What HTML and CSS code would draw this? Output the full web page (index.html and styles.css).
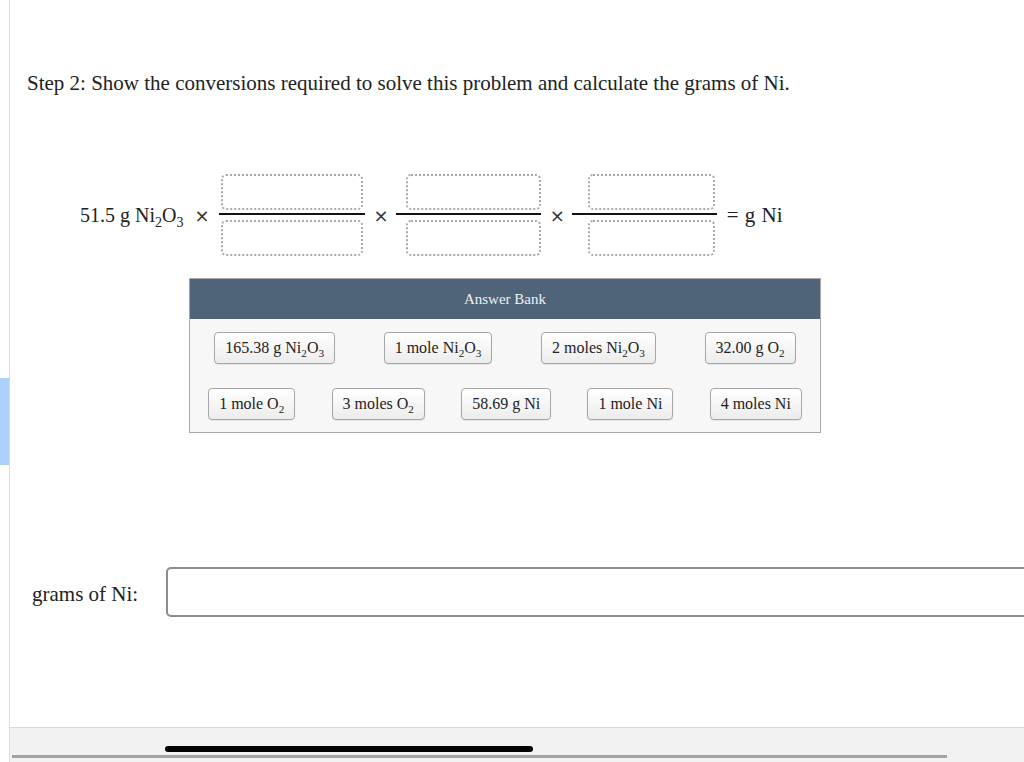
FILE: index.html
```html
<!DOCTYPE html>
<html lang="en">
<head>
    <meta charset="UTF-8">
    <title>Step 2</title>
    <link rel="stylesheet" href="styles.css">
</head>
<body>
    <div class="page">
        <div class="side">
            <div class="side-tab"></div>
        </div>
        <div class="main">
            <div class="content">
                <p class="question">Step 2: Show the conversions required to solve this problem and calculate the grams of Ni.</p>

                <div class="equation">
                    <span class="term lead">51.5 g Ni<sub>2</sub>O<sub>3</sub></span>
                    <span class="times">&times;</span>
                    <div class="frac frac-1">
                        <div class="slot"></div>
                        <div class="bar"></div>
                        <div class="slot"></div>
                    </div>
                    <span class="times">&times;</span>
                    <div class="frac frac-2">
                        <div class="slot"></div>
                        <div class="bar"></div>
                        <div class="slot"></div>
                    </div>
                    <span class="times">&times;</span>
                    <div class="frac frac-3">
                        <div class="slot"></div>
                        <div class="bar"></div>
                        <div class="slot"></div>
                    </div>
                    <span class="term result">= g Ni</span>
                </div>

                <div class="bank">
                    <div class="bank-head">Answer Bank</div>
                    <div class="bank-body">
                        <div class="bank-row">
                            <span class="chip">165.38 g Ni<sub>2</sub>O<sub>3</sub></span>
                            <span class="chip">1 mole Ni<sub>2</sub>O<sub>3</sub></span>
                            <span class="chip">2 moles Ni<sub>2</sub>O<sub>3</sub></span>
                            <span class="chip">32.00 g O<sub>2</sub></span>
                        </div>
                        <div class="bank-row">
                            <span class="chip">1 mole O<sub>2</sub></span>
                            <span class="chip">3 moles O<sub>2</sub></span>
                            <span class="chip">58.69 g Ni</span>
                            <span class="chip">1 mole Ni</span>
                            <span class="chip">4 moles Ni</span>
                        </div>
                    </div>
                </div>

                <div class="answer">
                    <label class="answer-label" for="grams">grams of Ni:</label>
                    <input class="answer-input" id="grams" type="text">
                </div>
            </div>

            <div class="footer">
                <div class="thumb"></div>
                <div class="track"></div>
            </div>
        </div>
    </div>
</body>
</html>
```

FILE: styles.css
```css
body {
    margin: 0;
    font-family: 'Liberation Serif', 'Times New Roman', serif;
    color: #222;
    background: #fff;
    overflow: hidden;
}
.page {
    display: flex;
    height: 762px;
}
.side {
    width: 9px;
}
.side-tab {
    margin-top: 378px;
    height: 87px;
    background-color: #aad2fc;
}
.main {
    flex: 1;
    display: flex;
    flex-direction: column;
    border-left: 1px solid #dcdcdc;
    min-width: 0;
}
.content {
    flex: 1;
    overflow: hidden;
}
sub {
    font-size: 0.7em;
    vertical-align: -0.35em;
    line-height: 0;
}
.question {
    margin: 72px 0 0 17px;
    font-size: 21px;
    line-height: 23px;
}

/* conversion row */
.equation {
    display: flex;
    align-items: center;
    margin: 79px 0 0 70px;
    font-size: 20px;
}
.times {
    margin: 0 9px 0 9px;
    font-family: 'DejaVu Sans', sans-serif;
    font-size: 18px;
    color: #333;
}
.term {
    white-space: nowrap;
}
.lead {
    margin-right: 2px;
}
.result {
    font-size: 21px;
    word-spacing: 1px;
}
.frac {
    display: flex;
    flex-direction: column;
    align-items: flex-end;
}
.slot {
    height: 32px;
    border: 2px dotted #aaa;
    border-radius: 5px;
}
.bar {
    align-self: stretch;
    height: 2px;
    background: #111;
    margin: 3px 0 5px;
}
.frac-1 {
    width: 146px;
}
.frac-1 .slot {
    width: 138px;
    margin-right: 2px;
}
.frac-2 {
    width: 145px;
    margin-left: -2px;
}
.frac-2 .slot {
    width: 131px;
}
.frac-3 {
    width: 145px;
    margin-left: -2px;
    margin-right: 10px;
}
.frac-3 .slot {
    width: 123px;
    margin-right: 2px;
}

/* answer bank */
.bank {
    width: 630px;
    margin: 22px 0 0 179px;
    border: 1px solid #a9a9a9;
    background: #f7f7f7;
}
.bank-head {
    height: 40px;
    line-height: 40px;
    background-color: #4f6379;
    color: #eef1f4;
    font-size: 15px;
    text-align: center;
}
.bank-body {
    display: flex;
    flex-direction: column;
    gap: 24px;
    padding: 13px 0 12px;
}
.bank-row {
    display: flex;
    justify-content: space-around;
}
.chip {
    height: 30px;
    line-height: 30px;
    padding: 0 10px;
    font-size: 16px;
    white-space: nowrap;
    border: 1px solid #a6a6a6;
    border-radius: 4px;
    background: linear-gradient(#ffffff, #ececec);
    box-shadow: 0 1px 1px rgba(0, 0, 0, 0.08);
}

/* answer input */
.answer {
    display: flex;
    align-items: center;
    margin-top: 134px;
}
.answer-label {
    flex: none;
    width: 134px;
    padding: 4px 0 0 22px;
    font-size: 21px;
}
.answer-input {
    flex: none;
    width: 900px;
    box-sizing: border-box;
    height: 50px;
    border: 2px solid #8c8c8c;
    border-radius: 5px;
    background: #fff;
}

/* bottom scroll strip */
.footer {
    height: 34px;
    border-top: 1px solid #d9d9d9;
    background: #f2f2f2;
}
.thumb {
    width: 368px;
    height: 6px;
    margin: 18px 0 0 155px;
    border-radius: 3px;
    background: #000;
}
.track {
    width: 935px;
    height: 3px;
    margin: 3px 0 0 2px;
    background: #a3a3a3;
}
```
